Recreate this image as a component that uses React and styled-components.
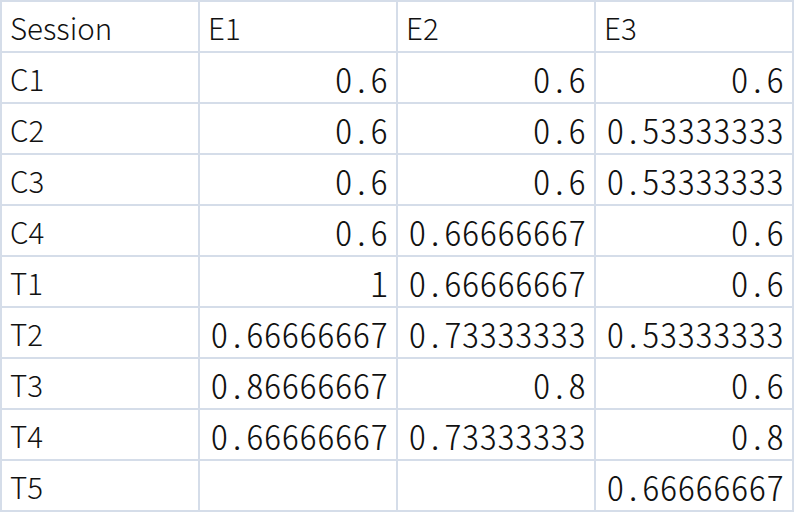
import React from 'react';
import styled, { createGlobalStyle } from 'styled-components';

const GlobalStyle = createGlobalStyle`
  html, body {
    margin: 0;
    padding: 0;
    background: #ffffff;
  }
`;

const Sheet = styled.div`
  display: grid;
  grid-template-columns: repeat(4, 196px);
  grid-auto-rows: 49px;
  gap: 2px;
  padding: 2px;
  width: 794px;
  height: 512px;
  box-sizing: border-box;
  background: #d5dde9;
`;

const Cell = styled.div`
  display: flex;
  align-items: center;
  justify-content: ${(p) => (p.$num ? 'flex-end' : 'flex-start')};
  padding: 0 8px 0 8px;
  background: #ffffff;
  color: #111111;
  font-family: "Noto Sans CJK JP", "Noto Sans", sans-serif;
  font-size: ${(p) => (p.$num ? '35.5px' : '29.5px')};
  font-weight: 300;
  font-feature-settings: ${(p) => (p.$num ? '"hwid" 1' : 'normal')};
  white-space: nowrap;
  overflow: hidden;
`;

const header = ['Session', 'E1', 'E2', 'E3'];

const rows = [
  ['C1', '0.6', '0.6', '0.6'],
  ['C2', '0.6', '0.6', '0.53333333'],
  ['C3', '0.6', '0.6', '0.53333333'],
  ['C4', '0.6', '0.66666667', '0.6'],
  ['T1', '1', '0.66666667', '0.6'],
  ['T2', '0.66666667', '0.73333333', '0.53333333'],
  ['T3', '0.86666667', '0.8', '0.6'],
  ['T4', '0.66666667', '0.73333333', '0.8'],
  ['T5', '', '', '0.66666667'],
];

export default function App() {
  return (
    <>
      <GlobalStyle />
      <Sheet>
        {header.map((h) => (
          <Cell key={h}>{h}</Cell>
        ))}
        {rows.map((r) =>
          r.map((v, i) => (
            <Cell key={r[0] + i} $num={i > 0}>
              {v}
            </Cell>
          ))
        )}
      </Sheet>
    </>
  );
}
